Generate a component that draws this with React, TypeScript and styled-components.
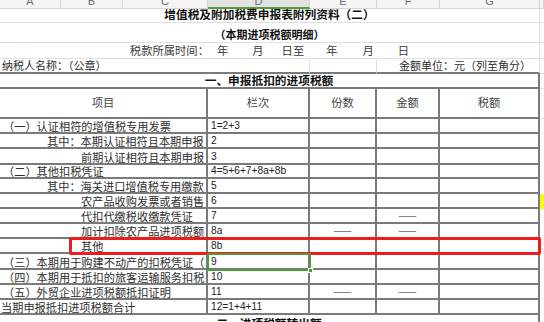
import React from 'react';
import styled, {createGlobalStyle} from 'styled-components';

const CJK = `"Noto Sans CJK SC", "Noto Sans CJK JP", sans-serif`;
const LATIN = `"Liberation Sans", Arial, sans-serif`;
const LINE = '#7a7a7a';
const GRID = '#e0e0e0';

const GlobalStyle = createGlobalStyle`
  html, body {
    margin: 0;
    padding: 0;
    background: #fff;
  }
  body {
    font-family: ${CJK};
    color: #2a2a2a;
  }
  * {
    box-sizing: border-box;
  }
`;

interface BodyRow {
  item: string;
  indent: number;
  code: string;
  dashE?: boolean;
  dashF?: boolean;
  mark?: boolean;
}

const columns = ['A', 'B', 'C', 'D', 'E', 'F', 'G'];

// 項目欄はD列の手前で切れて見える分だけ.
const bodyRows: BodyRow[] = [
  {item: '（一）认证相符的增值税专用发票', indent: 3, code: '1=2+3'},
  {item: '其中：本期认证相符且本期申报', indent: 47, code: '2'},
  {item: '前期认证相符且本期申报', indent: 81, code: '3'},
  {item: '（二）其他扣税凭证', indent: 3, code: '4=5+6+7+8a+8b'},
  {item: '其中：海关进口增值税专用缴款', indent: 47, code: '5'},
  {item: '农产品收购发票或者销售', indent: 81, code: '6', mark: true},
  {item: '代扣代缴税收缴款凭证', indent: 81, code: '7', dashF: true},
  {item: '加计扣除农产品进项税额', indent: 81, code: '8a', dashE: true, dashF: true},
  {item: '其他', indent: 81, code: '8b'},
  {item: '（三）本期用于购建不动产的扣税凭证（', indent: 3, code: '9'},
  {item: '（四）本期用于抵扣的旅客运输服务扣税', indent: 3, code: '10'},
  {item: '（五）外贸企业进项税额抵扣证明', indent: 3, code: '11', dashE: true, dashF: true},
  {item: '当期申报抵扣进项税额合计', indent: 1, code: '12=1+4+11'},
];

// 税款所属时间の各パーツと左の間隔.
const periodParts: [string, number][] = [
  ['税款所属时间：', 0],
  ['年', 8],
  ['月', 24],
  ['日至', 18],
  ['年', 22],
  ['月', 25],
  ['日', 24],
];

export default function App() {
  return (
    <>
      <GlobalStyle />
      <StyledFrame>
        <StyledSheet>
          {columns.map((c) => (
            <StyledColHead key={c} $active={c === 'D'}>
              <StyledColLetter>{c}</StyledColLetter>
            </StyledColHead>
          ))}
          <StyledColHead />

          <StyledBanner $bold $size={11.7}>
            增值税及附加税费申报表附列资料（二）
          </StyledBanner>
          <StyledMargin />
          <StyledBanner $bold $size={11}>
            （本期进项税额明细）
          </StyledBanner>
          <StyledMargin />
          <StyledBanner $size={11.3}>
            {periodParts.map(([t, gap], i) => (
              <StyledPeriodPart key={i} $gap={gap}>
                {t}
              </StyledPeriodPart>
            ))}
          </StyledBanner>
          <StyledMargin />

          <StyledInfoCell $span={4}>纳税人名称：（公章）</StyledInfoCell>
          <StyledInfoCell $span={1} />
          <StyledInfoCell $span={2} $right>
            金额单位：元（列至角分）
          </StyledInfoCell>
          <StyledMargin />

          <StyledSection>一、申报抵扣的进项税额</StyledSection>
          <StyledMargin />

          <StyledTableHead $span={3}>项目</StyledTableHead>
          <StyledTableHead>栏次</StyledTableHead>
          <StyledTableHead>份数</StyledTableHead>
          <StyledTableHead>金额</StyledTableHead>
          <StyledTableHead>税额</StyledTableHead>
          <StyledMargin />

          {bodyRows.map((row) => (
            <React.Fragment key={row.code}>
              <StyledItemCell $indent={row.indent}>{row.item}</StyledItemCell>
              <StyledCodeCell>{row.code}</StyledCodeCell>
              <StyledAmountCell>{row.dashE ? '——' : ''}</StyledAmountCell>
              <StyledAmountCell>{row.dashF ? '——' : ''}</StyledAmountCell>
              <StyledAmountCell />
              <StyledMargin $fill={row.mark} $plain />
            </React.Fragment>
          ))}

          <StyledSection $cut>二、进项税额转出额</StyledSection>
          <StyledMargin $plain />
        </StyledSheet>

        <StyledRedMark />
        <StyledSelection>
          <StyledHandle />
        </StyledSelection>
      </StyledFrame>
    </>
  );
}

const StyledFrame = styled.div`
  position: relative;
  width: 544px;
  height: 322px;
  overflow: hidden;
  background: #fff;
`;

const StyledSheet = styled.div`
  display: grid;
  grid-template-columns: 61px 62px 85px 102px 67px 63px 100px 4px;
  grid-template-rows:
    9px 14px 20px 16px 15px 15px 30px
    15px 15px 16px 14px 15px 15px 15px 15px 15px 16px 15px 15px 15px
    24px;
`;

const StyledColHead = styled.div<{$active?: boolean}>`
  display: flex;
  justify-content: center;
  overflow: hidden;
  background: ${(p) => (p.$active ? '#e2e2e2' : '#f5f5f5')};
  border-right: 1px solid #d6d6d6;
  border-bottom: ${(p) => (p.$active ? '2px solid #4f9a3b' : '1px solid #d6d6d6')};
`;

const StyledColLetter = styled.span`
  display: block;
  margin-top: -3px;
  height: 9px;
  font-family: ${LATIN};
  font-size: 11px;
  line-height: 9px;
  color: #6e6e6e;
`;

const StyledBanner = styled.div<{$bold?: boolean; $size?: number}>`
  grid-column: 1 / span 7;
  display: flex;
  align-items: flex-end;
  justify-content: center;
  padding-bottom: 2px;
  white-space: nowrap;
  border-right: 1px solid ${GRID};
  border-bottom: 1px solid ${GRID};
  font-size: ${(p) => p.$size ?? 11.3}px;
  font-weight: ${(p) => (p.$bold ? 700 : 400)};
  line-height: 1;
  color: ${(p) => (p.$bold ? '#111' : '#3a3a3a')};
`;

const StyledPeriodPart = styled.span<{$gap: number}>`
  margin-left: ${(p) => p.$gap}px;
`;

const StyledInfoCell = styled.div<{$span: number; $right?: boolean}>`
  grid-column: span ${(p) => p.$span};
  display: flex;
  align-items: flex-end;
  justify-content: ${(p) => (p.$right ? 'flex-end' : 'flex-start')};
  padding: 0 ${(p) => (p.$right ? 8 : 0)}px 1px ${(p) => (p.$right ? 0 : 2)}px;
  white-space: nowrap;
  border-right: 1px solid ${GRID};
  border-bottom: 2px solid ${LINE};
  font-size: 11px;
  line-height: 1;
  color: #2e2e2e;
`;

const StyledSection = styled.div<{$cut?: boolean}>`
  grid-column: 1 / span 7;
  display: flex;
  align-items: ${(p) => (p.$cut ? 'flex-start' : 'flex-end')};
  justify-content: center;
  padding: ${(p) => (p.$cut ? '2px 0 0' : '0 0 1px')};
  border-right: 2px solid ${LINE};
  border-bottom: ${(p) => (p.$cut ? 'none' : `2px solid ${LINE}`)};
  font-size: 11.7px;
  font-weight: 700;
  line-height: 1;
  color: #111;
  white-space: nowrap;
`;

const StyledTableHead = styled.div<{$span?: number}>`
  grid-column: span ${(p) => p.$span ?? 1};
  display: flex;
  align-items: center;
  justify-content: center;
  border-right: 2px solid ${LINE};
  border-bottom: 2px solid ${LINE};
  font-size: 11.3px;
  line-height: 1;
  color: #444;
`;

const StyledItemCell = styled.div<{$indent: number}>`
  grid-column: 1 / span 3;
  display: flex;
  align-items: flex-end;
  overflow: hidden;
  white-space: nowrap;
  padding: 0 0 0 ${(p) => p.$indent}px;
  border-right: 2px solid ${LINE};
  border-bottom: 2px solid ${LINE};
  font-size: 11.2px;
  line-height: 1;
  color: #2e2e2e;
`;

const StyledCodeCell = styled.div`
  display: flex;
  align-items: flex-end;
  padding: 0 0 1px 3px;
  overflow: hidden;
  white-space: nowrap;
  border-right: 2px solid ${LINE};
  border-bottom: 2px solid ${LINE};
  font-family: ${LATIN};
  font-size: 10.2px;
  line-height: 1;
  color: #222;
`;

const StyledAmountCell = styled.div`
  display: flex;
  align-items: center;
  justify-content: center;
  border-right: 2px solid ${LINE};
  border-bottom: 2px solid ${LINE};
  font-size: 11px;
  line-height: 1;
  color: #666;
`;

const StyledMargin = styled.div<{$fill?: boolean; $plain?: boolean}>`
  background: ${(p) => (p.$fill ? '#ffff00' : 'transparent')};
  border-bottom: ${(p) => (p.$plain ? 'none' : `1px solid ${GRID}`)};
`;

// 赤枠のハイライト(8b行).
const StyledRedMark = styled.div`
  position: absolute;
  left: 69px;
  top: 237px;
  width: 472px;
  height: 18px;
  border: 3px solid #ee1d1d;
  border-radius: 2px;
`;

// 選択セル D(9).
const StyledSelection = styled.div`
  position: absolute;
  left: 207px;
  top: 253px;
  width: 104px;
  height: 18px;
  border: 2px solid #4f9a3b;
`;

const StyledHandle = styled.div`
  position: absolute;
  right: -4px;
  bottom: -4px;
  width: 5px;
  height: 5px;
  background: #4f9a3b;
  border: 1px solid #fff;
`;
